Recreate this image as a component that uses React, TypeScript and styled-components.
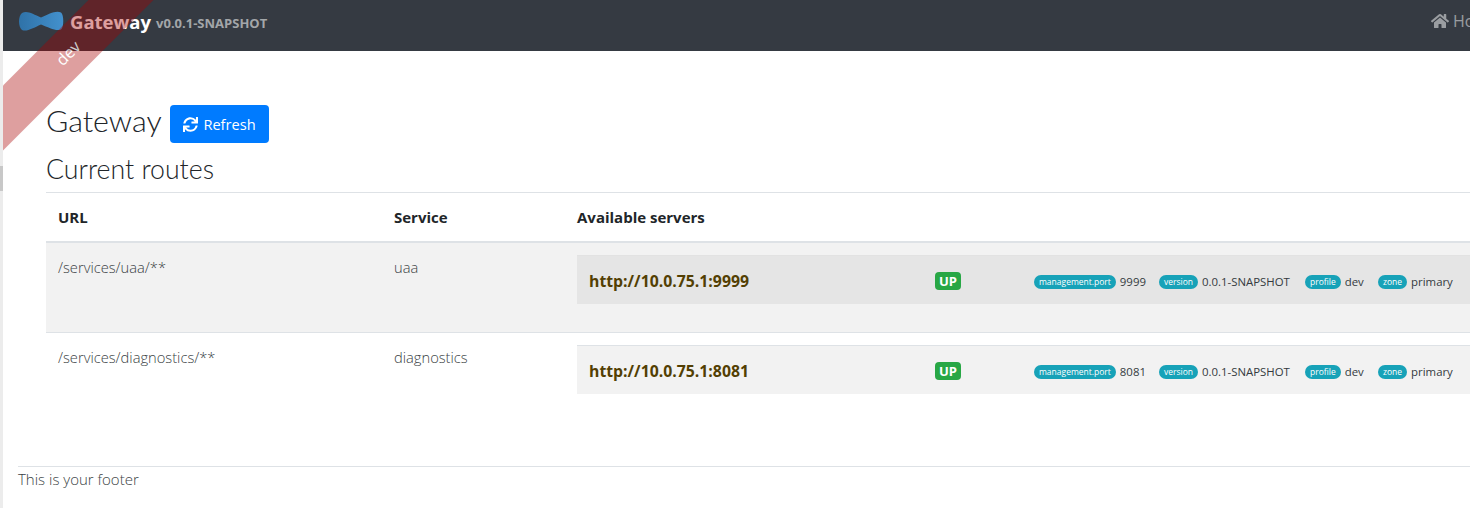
import React from 'react';
import styled, { createGlobalStyle } from 'styled-components';
import { FaHome, FaSync } from 'react-icons/fa';

const Global = createGlobalStyle`
  html, body { margin: 0; padding: 0; width: 1470px; height: 508px; overflow: hidden; background: #fff; }
  body { font-family: "Open Sans", "Noto Sans", sans-serif; color: #212529; font-size: 14px; font-weight: 300; }
  * { box-sizing: border-box; }
`;

const Viewport = styled.div`
  display: flex;
  width: 1470px;
  height: 508px;
  overflow: hidden;
`;
const ScrollTrack = styled.div`
  flex: 0 0 3px;
  background: #ececec;
  padding-top: 166px;
`;
const ScrollThumb = styled.div`
  height: 25px;
  background: #c8c8c8;
`;
const Page = styled.div`
  position: relative;
  flex: 0 0 1467px;
  overflow: hidden;
`;
const Ribbon = styled.div`
  position: absolute;
  left: -85px;
  top: 30px;
  width: 300px;
  height: 46px;
  line-height: 46px;
  text-align: center;
  transform: rotate(-45deg);
  background: rgba(170, 0, 0, 0.5);
  opacity: 0.75;
  color: #fff;
  font-size: 16px;
  font-weight: 400;
  z-index: 5;
`;
const Navbar = styled.nav`
  display: flex;
  align-items: center;
  justify-content: space-between;
  height: 51px;
  padding: 0 0 0 16px;
  background: #353a42;
  overflow: hidden;
`;
const Brand = styled.div`
  display: flex;
  align-items: center;
  gap: 6px;
  margin-top: -9px;
`;
const BrandTitle = styled.span`
  color: #fff;
  font-size: 18.5px;
  font-weight: 700;
`;
const BrandVersion = styled.span`
  color: #a3a6a9;
  font-size: 13px;
  font-weight: 700;
  margin-left: -1px;
  margin-top: 3px;
`;
const NavLink = styled.div`
  display: flex;
  align-items: center;
  gap: 4px;
  flex: 0 0 39px;
  margin-top: -9px;
  color: rgba(255, 255, 255, 0.5);
  font-size: 16px;
  font-weight: 400;
  white-space: nowrap;
  overflow: hidden;
  svg { flex: 0 0 18px; }
`;
const Main = styled.main`
  padding: 50px 0 0 43px;
  height: 415px;
`;
const HeadingRow = styled.div`
  display: flex;
  align-items: center;
  gap: 10px;
  height: 42px;
  margin-top: 2px;
`;
const Title = styled.h2`
  margin: 0 0 9px;
  width: 114px;
  font-family: "Lato", sans-serif;
  font-size: 30.4px;
  font-weight: 300;
  white-space: nowrap;
`;
const Button = styled.button`
  display: flex;
  align-items: center;
  justify-content: center;
  gap: 5px;
  width: 99px;
  height: 38px;
  border: 0;
  border-radius: 4px;
  background: #007bff;
  color: #fff;
  font: 400 14.6px "Open Sans", sans-serif;
`;
const SubTitle = styled.h3`
  margin: 8px 0 0;
  height: 39px;
  line-height: 32px;
  font-family: "Lato", sans-serif;
  font-size: 26.7px;
  font-weight: 300;
`;
const Table = styled.table`
  width: 1500px;
  table-layout: fixed;
  border-collapse: collapse;
`;
const HeadCell = styled.th<{ $w: number }>`
  width: ${p => p.$w}px;
  height: 49px;
  padding: 0 12px;
  text-align: left;
  font-size: 15px;
  font-weight: 700;
  border-top: 1px solid #dee2e6;
  border-bottom: 2px solid #dee2e6;
`;
const Row = styled.tr<{ $shaded?: boolean }>`
  background: ${p => (p.$shaded ? '#f2f2f2' : '#fff')};
  border-bottom: 1px solid #dee2e6;
  &:last-child { border-bottom: 0; }
`;
const Cell = styled.td`
  padding: 12px;
  vertical-align: top;
  font-size: 14.7px;
  line-height: 25px;
  color: #3a3f44;
`;
const ServerCell = styled(Cell)`
  padding-bottom: 28px;
`;
const Server = styled.div<{ $shaded?: boolean }>`
  display: grid;
  grid-template-columns: 358px 99px 1fr;
  align-items: center;
  height: 49px;
  padding-top: 2px;
  border-top: 1px solid ${p => (p.$shaded ? '#e2e2e2' : '#dee2e6')};
  background: ${p => (p.$shaded ? '#e5e5e5' : '#f2f2f2')};
`;
const ServerUrl = styled.span`
  padding-left: 12px;
  font-size: 15.8px;
  line-height: 24px;
  font-weight: 700;
  color: #533f03;
`;
const Status = styled.span`
  display: block;
  width: 26px;
  height: 18px;
  line-height: 18px;
  text-align: center;
  border-radius: 4px;
  background: #28a745;
  color: #fff;
  font-size: 13px;
  font-weight: 700;
`;
const Meta = styled.div`
  display: flex;
  align-items: center;
  margin-top: 2px;
  white-space: nowrap;
  font-size: 11.4px;
  line-height: 16px;
  font-weight: 400;
  color: #343a40;
`;
const MetaItem = styled.span<{ $w: number }>`
  display: flex;
  align-items: center;
  gap: 4px;
  width: ${p => p.$w}px;
`;
const Pill = styled.span`
  height: 14px;
  line-height: 14px;
  padding: 0 5px;
  border-radius: 8px;
  background: #17a2b8;
  color: #fff;
  font-size: 8.5px;
  font-weight: 400;
`;
const Footer = styled.footer`
  margin-left: 15px;
  border-top: 1px solid #dee2e6;
  padding-top: 2px;
  font-size: 15px;
  color: #3a3f44;
`;

const meta = (port: string) => [
  { k: 'management.port', v: port, w: 125 },
  { k: 'version', v: '0.0.1-SNAPSHOT', w: 146 },
  { k: 'profile', v: 'dev', w: 73 },
  { k: 'zone', v: 'primary', w: 90 },
];

function ServerRow({ url, port, shaded }: { url: string; port: string; shaded?: boolean }) {
  return (
    <Server $shaded={shaded}>
      <ServerUrl>{url}</ServerUrl>
      <span><Status>UP</Status></span>
      <Meta>
        {meta(port).map(m => (
          <MetaItem key={m.k} $w={m.w}>
            <Pill>{m.k}</Pill>
            {m.v}
          </MetaItem>
        ))}
      </Meta>
    </Server>
  );
}

export default function App() {
  return (
    <Viewport>
      <Global />
      <ScrollTrack><ScrollThumb /></ScrollTrack>
      <Page>
        <Ribbon>dev</Ribbon>
        <Navbar>
          <Brand>
            <svg width="45" height="20" viewBox="0 0 45 20">
              <defs>
                <linearGradient id="bow" x1="0" y1="0" x2="1" y2="0">
                  <stop offset="0" stopColor="#2f72a8" />
                  <stop offset="1" stopColor="#4391cd" />
                </linearGradient>
              </defs>
              <path d="M3 2 C8 -1 14 3 22 6.5 C30 3 37 -1 42 1.5 C45 4 45 16 42 18.5 C37 20.5 30 16.5 22 13.5 C14 17 8 21 3 19 C-1 16 -1 5 3 2Z" fill="url(#bow)" />
            </svg>
            <BrandTitle>Gateway</BrandTitle>
            <BrandVersion>v0.0.1-SNAPSHOT</BrandVersion>
          </Brand>
          <NavLink><FaHome size={18} />Home</NavLink>
        </Navbar>
        <Main>
          <HeadingRow>
            <Title>Gateway</Title>
            <Button><FaSync size={15} />Refresh</Button>
          </HeadingRow>
          <SubTitle>Current routes</SubTitle>
          <Table>
            <thead>
              <tr>
                <HeadCell $w={336}>URL</HeadCell>
                <HeadCell $w={183}>Service</HeadCell>
                <HeadCell $w={981}>Available servers</HeadCell>
              </tr>
            </thead>
            <tbody>
              <Row $shaded>
                <Cell>/services/uaa/**</Cell>
                <Cell>uaa</Cell>
                <ServerCell><ServerRow shaded url="http://10.0.75.1:9999" port="9999" /></ServerCell>
              </Row>
              <Row>
                <Cell>/services/diagnostics/**</Cell>
                <Cell>diagnostics</Cell>
                <Cell><ServerRow url="http://10.0.75.1:8081" port="8081" /></Cell>
              </Row>
            </tbody>
          </Table>
        </Main>
        <Footer>This is your footer</Footer>
      </Page>
    </Viewport>
  );
}
